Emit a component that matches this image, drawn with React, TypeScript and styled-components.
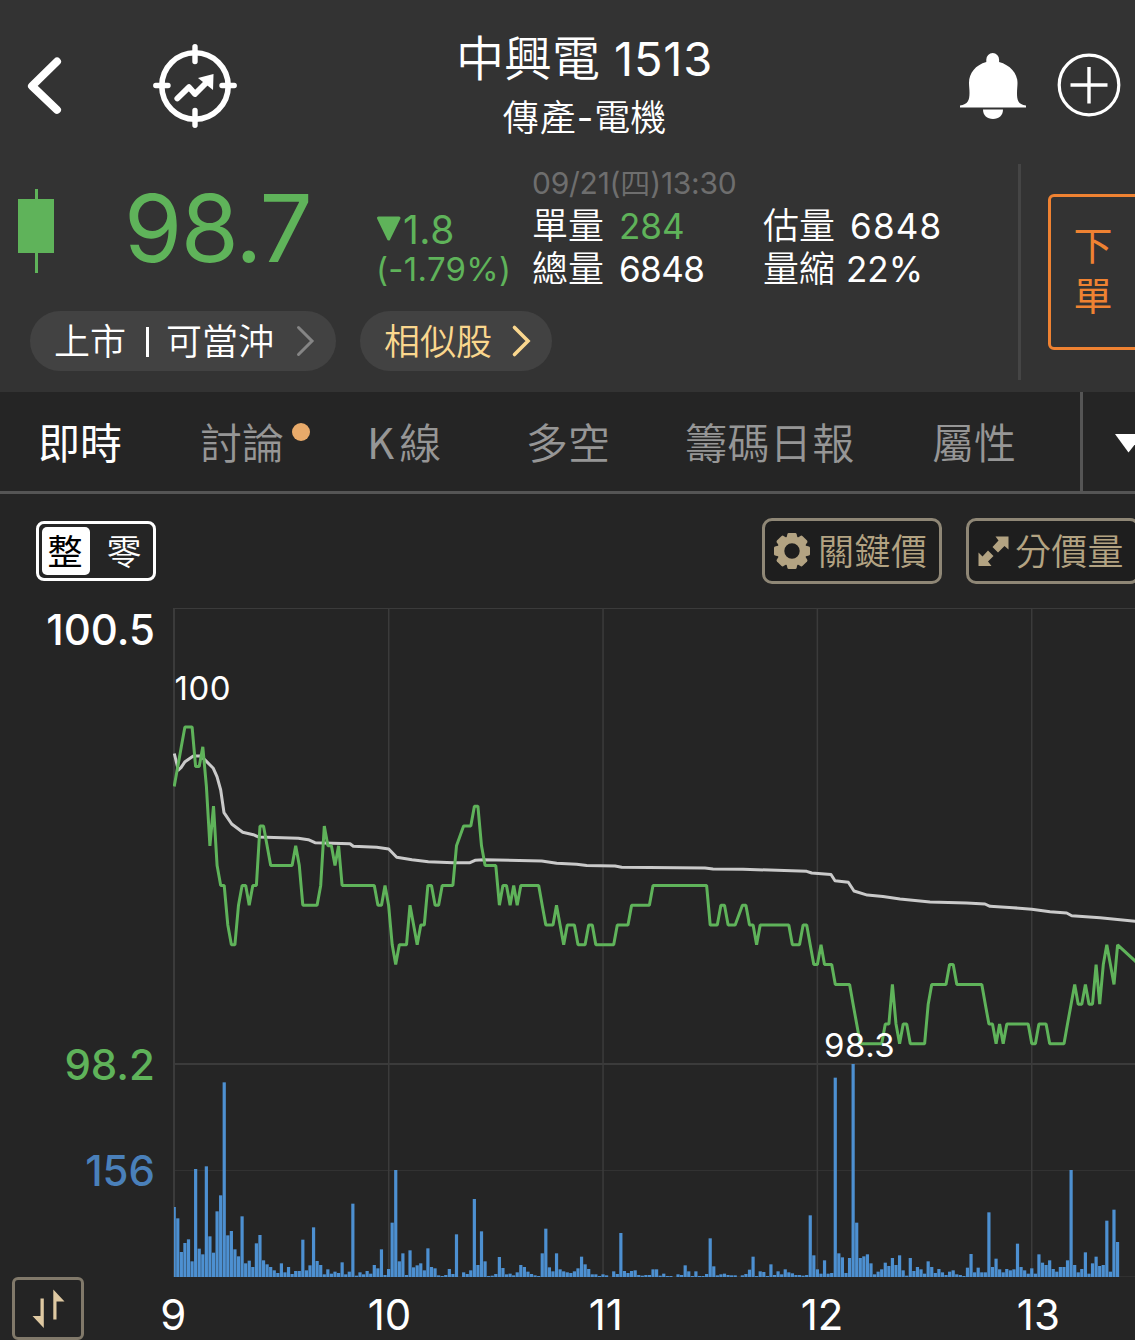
import React from "react";
import styled, { createGlobalStyle } from "styled-components";

const C = {
  header: "#333333",
  body: "#252525",
  green: "#5fb35a",
  blue: "#4d90d1",
  gold: "#fad78e",
  tan: "#b3a382",
  orange: "#ef8232",
  grid: "#3b3b3b",
};

const Global = createGlobalStyle`
  *, *::before, *::after { box-sizing: border-box; }
  html, body { margin: 0; padding: 0; background: ${C.body}; overflow: hidden; }
`;

const Screen = styled.main`
  width: 1135px;
  height: 1340px;
  overflow: hidden;
  display: flex;
  flex-direction: column;
  background: ${C.body};
  color: #fff;
  font-family: Inter, "Noto Sans CJK TC", sans-serif;
  font-weight: 400;
  white-space: pre;
`;

const CJK = styled.span<{ $size: number; $space?: number; $weight?: number }>`
  font-family: "Noto Sans CJK TC", sans-serif;
  font-size: ${(p) => p.$size}px;
  letter-spacing: ${(p) => p.$space ?? 0}px;
  font-weight: ${(p) => p.$weight ?? 350};
`;

const Num = styled.span<{ $size: number; $space?: number; $color?: string; $left?: number }>`
  font-size: ${(p) => p.$size}px;
  letter-spacing: ${(p) => p.$space ?? 0}px;
  color: ${(p) => p.$color ?? "inherit"};
  margin-left: ${(p) => p.$left ?? 0}px;
`;

/* ---------- navigation bar ---------- */

const NavBar = styled.header`
  flex: none;
  height: 160px;
  display: flex;
  background: ${C.header};
  padding: 0 13px 0 24px;
`;

const NavIcons = styled.div<{ $gap: number }>`
  flex: none;
  display: flex;
  align-items: center;
  height: 172px;
  gap: ${(p) => p.$gap}px;
`;

const Titles = styled.div`
  flex: 1;
  display: flex;
  flex-direction: column;
  align-items: center;
  padding-top: 26px;
  margin-right: 28px;
`;

const TitleLine = styled.h1`
  margin: 0;
  height: 61px;
  display: flex;
  align-items: baseline;
  font-weight: 400;
  line-height: 58px;
`;

const SubTitle = styled.div`
  height: 56px;
  line-height: 56px;
  display: flex;
  align-items: baseline;
`;

/* ---------- quote summary ---------- */

const Quote = styled.section`
  flex: none;
  height: 232px;
  display: flex;
  background: ${C.header};
`;

const QuoteMain = styled.div`
  width: 1018px;
  display: flex;
  flex-direction: column;
`;

const QuoteRow = styled.div`
  height: 151px;
  display: flex;
`;

const Candle = styled.div`
  width: 36px;
  margin: 29px 0 0 18px;
  height: 84px;
  display: flex;
  flex-direction: column;
  align-items: center;
`;
const Wick = styled.i<{ $h: number }>`
  width: 3px;
  height: ${(p) => p.$h}px;
  background: ${C.green};
`;
const CandleBody = styled.i`
  width: 36px;
  height: 54px;
  background: ${C.green};
`;

const Price = styled.div`
  width: 252px;
  margin: 10px 0 0 70px;
  font-size: 94px;
  line-height: 116px;
  letter-spacing: -1.5px;
  color: ${C.green};
`;

const Change = styled.div`
  width: 156px;
  color: ${C.green};
  padding-top: 49px;
`;
const ChangeLine = styled.div`
  height: 40px;
  line-height: 41px;
  display: flex;
  align-items: center;
`;

const Stats = styled.div`
  padding-top: 1px;
`;
const Stamp = styled.div`
  height: 41px;
  line-height: 40px;
  color: #6e6e6e;
  display: flex;
  align-items: baseline;
`;
const StatGrid = styled.div`
  display: grid;
  grid-template-columns: 231px 220px;
  grid-auto-rows: 43px;
`;
const Stat = styled.div`
  display: flex;
  align-items: baseline;
  line-height: 43px;
`;

const Chips = styled.div`
  display: flex;
  gap: 24px;
  padding-left: 30px;
`;
const Chip = styled.button<{ $w: number; $gold?: boolean }>`
  width: ${(p) => p.$w}px;
  height: 60px;
  border: 0;
  border-radius: 30px;
  background: #424242;
  color: ${(p) => (p.$gold ? C.gold : "#fff")};
  padding: 0 21px 0 24px;
  display: flex;
  align-items: center;
  justify-content: space-between;
  white-space: pre;
`;
const ChipLabel = styled.span`
  display: flex;
  align-items: center;
  padding-bottom: 4px;
`;
const ChipBar = styled.i`
  width: 3px;
  height: 30px;
  margin: 6px 17px 0 20px;
  background: #fff;
`;

const OrderPane = styled.aside`
  width: 117px;
  height: 216px;
  margin-top: 4px;
  padding: 30px 0 0 27px;
  border-left: 3px solid #454545;
`;
const OrderButton = styled.button`
  width: 100px;
  height: 156px;
  padding: 0 10px 8px 0;
  border: 3px solid ${C.orange};
  border-radius: 6px;
  background: transparent;
  color: ${C.orange};
  display: flex;
  flex-direction: column;
  align-items: center;
  justify-content: center;
`;
const OrderGlyph = styled(CJK)`
  line-height: 50px;
`;

/* ---------- tabs ---------- */

const TabBar = styled.nav`
  flex: none;
  height: 102px;
  display: flex;
  border-bottom: 3px solid #555;
`;
const TabList = styled.div`
  flex: none;
  width: 1083px;
  display: flex;
  padding-left: 38px;
  border-right: 3px solid #555;
`;
const Tab = styled.a<{ $w: number; $active?: boolean }>`
  flex: none;
  width: ${(p) => p.$w}px;
  height: 99px;
  display: flex;
  align-items: baseline;
  line-height: 98px;
  color: ${(p) => (p.$active ? "#fff" : "#969696")};
`;
const Dot = styled.i`
  align-self: flex-start;
  width: 18px;
  height: 18px;
  margin: 31px 0 0 8px;
  border-radius: 50%;
  background: #e8aa6a;
`;
const MoreTabs = styled.div`
  padding: 42px 0 0 32px;
  display: flex;
  align-items: flex-start;
`;

/* ---------- chart tools ---------- */

const Tools = styled.div`
  flex: none;
  height: 114px;
  display: flex;
  padding: 24px 0 0 36px;
`;
const Toggle = styled.div`
  flex: none;
  width: 120px;
  height: 60px;
  margin: 3px 606px 0 0;
  padding: 3px;
  display: flex;
  border: 3px solid #fff;
  border-radius: 8px;
`;
const ToggleItem = styled.span<{ $on?: boolean }>`
  width: ${(p) => (p.$on ? 48 : 70)}px;
  flex: none;
  height: 48px;
  padding: 0 2px 4px 0;
  border-radius: 5px;
  background: ${(p) => (p.$on ? "#fff" : "transparent")};
  color: ${(p) => (p.$on ? "#000" : "#fff")};
  display: flex;
  align-items: center;
  justify-content: center;
`;
const ToolButton = styled.button<{ $w: number; $gap: number }>`
  flex: none;
  width: ${(p) => p.$w}px;
  height: 66px;
  margin-right: 24px;
  padding: 0 0 0 9px;
  display: flex;
  align-items: center;
  gap: ${(p) => p.$gap}px;
  border: 3px solid #8f8776;
  border-radius: 10px;
  background: #1e1e1e;
  color: ${C.tan};
`;
const ToolLabel = styled(CJK)`
  padding-bottom: 4px;
`;

/* ---------- chart ---------- */

const ChartArea = styled.section`
  flex: none;
  height: 669px;
  display: flex;
`;
const Scale = styled.div`
  width: 155px;
  display: flex;
  flex-direction: column;
  align-items: flex-end;
  margin-right: 18px;
`;
const ScaleLabel = styled.div<{ $gap: number; $color: string; $space?: number }>`
  height: 50px;
  margin-top: ${(p) => p.$gap}px;
  line-height: 50px;
  font-size: 42px;
  font-weight: 500;
  letter-spacing: ${(p) => p.$space ?? 0}px;
  color: ${(p) => p.$color};
`;
const Plot = styled.svg`
  display: block;
  width: 962px;
  height: 669px;
  overflow: hidden;
`;
const Footer = styled.footer`
  flex: none;
  height: 63px;
  display: flex;
  padding-left: 12px;
`;
const SwapButton = styled.button`
  flex: none;
  width: 72px;
  height: 63px;
  padding: 0;
  border: 3px solid #81796a;
  border-radius: 6px;
  background: #242424;
  display: flex;
  align-items: center;
  justify-content: center;
`;
const Hours = styled.div`
  margin-left: -19px;
  display: flex;
`;
const Hour = styled.span`
  width: 216.3px;
  line-height: 75px;
  text-align: center;
  font-size: 42px;
`;

/* ---------- data ---------- */

const STEP = 3.5733;
const ORIGIN = 1.2;

// [minute, ticks below the day's high]
const PRICE: [number, number][] = [
  [0, 3], [1, 2], [2, 1], [3, 0], [5, 0], [6, 2], [7, 2], [8, 1], [9, 3], [10, 6], [11, 4], [12, 7], [13, 8], [14, 8],
  [15, 10], [16, 11], [17, 11], [18, 9], [19, 8], [20, 8], [21, 9], [22, 8], [23, 8], [24, 5], [25, 5], [26, 6], [27, 7],
  [33, 7], [34, 6], [35, 7], [36, 9], [40, 9], [41, 8], [42, 5], [43, 6], [44, 6], [45, 7], [46, 6], [47, 8], [56, 8],
  [57, 9], [58, 9], [59, 8], [60, 9], [61, 11], [62, 12], [63, 11], [65, 11], [66, 9], [67, 10], [68, 11], [69, 10],
  [70, 10], [71, 8], [72, 8], [73, 9], [74, 9], [75, 8], [78, 8], [79, 6], [81, 5], [83, 5], [84, 4], [85, 4], [86, 6],
  [87, 7], [90, 7], [91, 9], [92, 8], [93, 8], [94, 9], [95, 8], [96, 9], [97, 8], [102, 8], [103, 9], [104, 10],
  [106, 10], [107, 9], [108, 10], [109, 11], [110, 10], [112, 10], [113, 11], [115, 11], [116, 10], [117, 10], [118, 11],
  [123, 11], [124, 10], [127, 10], [128, 9], [133, 9], [134, 8], [149, 8], [150, 10], [152, 10], [153, 9], [154, 9],
  [155, 10], [157, 10], [159, 9], [160, 9], [161, 10], [162, 10], [163, 11], [164, 10], [172, 10], [173, 11], [175, 11],
  [176, 10], [177, 10], [178, 11], [179, 12], [180, 12], [181, 11], [182, 12], [184, 12], [185, 13], [189, 13],
  [190, 14], [191, 15], [192, 16], [198, 16], [199, 15], [200, 15], [201, 13], [202, 15], [203, 16], [204, 15],
  [205, 15], [206, 16], [210, 16], [211, 14], [212, 13], [216, 13], [217, 12], [218, 12], [219, 13], [226, 13],
  [227, 14], [228, 15], [229, 15], [230, 16], [231, 15], [232, 16], [233, 15], [239, 15], [240, 16], [241, 16],
  [242, 15], [244, 15], [245, 16], [249, 16], [250, 15], [251, 14], [252, 13], [253, 14], [254, 14], [255, 13],
  [256, 14], [257, 14], [258, 12], [259, 14], [260, 12], [261, 11], [262, 12], [263, 13], [264, 11], [270, 12],
];

const AVERAGE: [number, number][] = [
  [174.3, 753.5], [178.3, 770], [181, 767.7], [185, 761.7], [193.3, 755.9], [200.7, 755.9], [206.7, 761.7],
  [213.3, 768.3], [217, 776.7], [220.7, 790], [224, 812.7], [231.7, 824], [242.7, 832.3], [253.3, 834.7],
  [258.3, 836.9], [298.3, 838.2], [308.3, 839.7], [315, 842.7], [350, 843.7], [353.3, 846.3], [376.7, 847.3],
  [388.7, 849], [396.7, 857.2], [412, 859.8], [428.3, 861.7], [453.3, 862.7], [470, 862.7], [475, 860.3], [483.3, 859.7],
  [541.7, 861], [556.7, 863.3], [576.7, 864.3], [586.7, 865.6], [615, 866], [621.7, 867.3], [705, 868], [713, 869],
  [743, 869.2], [806.7, 871.3], [811.7, 873], [831, 874.5], [835, 880.7], [848.3, 882.3], [854, 891], [867.3, 895.1],
  [883, 896.5], [900, 899], [930, 902], [966.7, 903], [985, 904], [990, 906.3], [1013, 907.7], [1031.7, 909.3],
  [1050, 911.7], [1066.7, 913], [1071.7, 915.7], [1100, 917.7], [1136, 921.4],
];

// volume bar heights per minute, in thirds of a pixel
const VOLUME = [
  210, 176, 75, 102, 113, 47, 324, 85, 68, 332, 122, 73, 197, 245, 584, 125, 138, 83, 62, 182, 41, 49, 30, 101, 126,
  50, 38, 30, 20, 12, 41, 14, 30, 9, 18, 18, 112, 20, 35, 149, 48, 36, 8, 23, 10, 16, 12, 44, 8, 16, 220, 4, 14, 8, 18,
  10, 36, 26, 83, 6, 24, 163, 321, 47, 71, 6, 80, 29, 35, 41, 20, 86, 30, 26, 5, 3, 6, 24, 9, 128, 0, 14, 9, 20, 234,
  36, 137, 47, 3, 4, 9, 60, 27, 8, 10, 5, 14, 36, 30, 16, 9, 5, 3, 71, 145, 29, 17, 71, 23, 17, 14, 12, 17, 26, 61, 38,
  24, 8, 8, 3, 8, 5, 0, 17, 9, 132, 18, 12, 18, 20, 6, 4, 6, 6, 23, 23, 4, 10, 3, 3, 0, 8, 6, 35, 17, 3, 17, 3, 3, 9,
  116, 32, 5, 8, 10, 6, 5, 5, 0, 5, 9, 22, 61, 3, 17, 15, 3, 38, 6, 17, 8, 23, 14, 11, 6, 6, 4, 6, 185, 65, 23, 10, 50,
  10, 12, 598, 71, 59, 12, 57, 639, 163, 57, 62, 68, 41, 8, 16, 23, 43, 33, 57, 36, 65, 20, 4, 57, 18, 30, 23, 10, 47,
  30, 12, 24, 14, 6, 16, 20, 8, 6, 3, 28, 69, 14, 28, 14, 14, 194, 30, 55, 23, 14, 24, 20, 23, 100, 30, 20, 10, 26, 10,
  68, 43, 36, 50, 24, 16, 30, 30, 50, 321, 36, 14, 24, 74, 10, 41, 61, 33, 36, 169, 16, 202, 105,
];

const pricePoints = PRICE.map(([m, t]) => `${(ORIGIN + m * STEP).toFixed(1)},${(119 + t * 19.8).toFixed(1)}`).join(" ");
const averagePoints = AVERAGE.map(([x, y]) => `${(x - 173).toFixed(1)},${(y - 608).toFixed(1)}`).join(" ");

/* ---------- icons ---------- */

const BackIcon = () => (
  <svg width="40" height="60" viewBox="0 0 40 60" fill="none">
    <path d="M33 5.500 L8 30 L33 53.800" stroke="#fff" strokeWidth="8" strokeLinecap="round" strokeLinejoin="round" />
  </svg>
);

const TargetIcon = () => (
  <svg width="84" height="84" viewBox="0 0 84 84" fill="none" stroke="#fff" strokeLinecap="round">
    <circle cx="42" cy="42" r="33.2" strokeWidth="5.6" />
    <path d="M42 2.8V17.5M42 66.500V81.200M2.800 41.500H15M69 41.500H81.200" strokeWidth="5.400" />
    <path d="M24.300 54.500 L36 43.200 L42 50 L55 37" strokeWidth="5.800" strokeLinejoin="round" />
    <path d="M45 34 L60.500 30 L60 46 Z" fill="#fff" stroke="none" />
  </svg>
);

const BellIcon = () => (
  <svg width="66" height="66" viewBox="0 0 66 66" fill="#fff">
    <path d="M26.300 9 V6.500 a6.400 6.400 0 0 1 12.800 0 V9 C50 12 57.500 20 57.500 30 C57.500 33 57 36 57 40 C57 47 58 51.500 66 52.500 V54.600 H0 V52.500 C8 51.500 9.500 47 9.500 40 C9.500 36 9 33 9 30 C9 20 15.500 12 26.300 9Z" />
    <path d="M23 56.600 H43 C43 62.500 39 66 33 66 S23 62.500 23 56.600Z" />
  </svg>
);

const PlusIcon = () => (
  <svg width="66" height="66" viewBox="0 0 66 66" fill="none" stroke="#fff">
    <circle cx="33" cy="32" r="29.800" strokeWidth="3.200" />
    <path d="M33 14V50.500M14.500 32H51.500" strokeWidth="3.400" />
  </svg>
);

const Chevron = ({ color, size }: { color: string; size: number }) => (
  <svg width="20" height="34" viewBox="0 0 20 34" fill="none">
    <path d="M3.500 3.500 L17 17 L3.500 30.500" stroke={color} strokeWidth={size} strokeLinecap="round" strokeLinejoin="miter" />
  </svg>
);

const DownMark = () => (
  <svg width="26" height="26" viewBox="0 0 26 26">
    <path d="M2.500 2 H23 L12.700 23Z" fill={C.green} stroke={C.green} strokeWidth="3" strokeLinejoin="round" />
  </svg>
);

const GearIcon = () => (
  <svg width="36" height="36" viewBox="-18 -18 36 36">
    {[0, 45, 90, 135, 180, 225, 270, 315].map((a) => (
      <path key={a} d="M-6 -11 L-4.600 -17 Q-4.300 -18 -3.300 -18 H3.300 Q4.300 -18 4.600 -17 L6 -11Z" fill={C.tan} transform={`rotate(${a})`} />
    ))}
    <circle r="11.200" fill="none" stroke={C.tan} strokeWidth="7" />
  </svg>
);

const ExpandIcon = () => (
  <svg width="31" height="31" viewBox="0 0 31 31" fill={C.tan}>
    <path d="M17.500 0.500 H30.500 V13.500 L26.500 10 L20 16.500 L14.500 11 L20.500 4.500Z" />
    <path d="M13.500 30 H0.500 V16.500 L4.500 20.500 L10 14.500 L15.500 20 L10 25.500Z" />
  </svg>
);

const SwapIcon = () => (
  <svg width="34" height="40" viewBox="0 0 34 40" fill="#dfc9a2">
    <path d="M9.500 9.500H12.800V39L1.500 27H9.500Z" />
    <path d="M22.300 .500L33.500 12.500H25.500V30.500H22.300Z" />
  </svg>
);

export default function App() {
  return (
    <Screen>
      <Global />
      <NavBar>
        <NavIcons $gap={89}>
          <BackIcon />
          <TargetIcon />
        </NavIcons>
        <Titles>
          <TitleLine>
            <CJK $size={48}>中興電</CJK>
            <Num $size={47} $space={0.8} $left={14}>1513</Num>
          </TitleLine>
          <SubTitle>
            <CJK $size={36} $space={1}>傳產</CJK>
            <Num $size={36} $space={1}>-</Num>
            <CJK $size={36}>電機</CJK>
          </SubTitle>
        </Titles>
        <NavIcons $gap={30}>
          <BellIcon />
          <PlusIcon />
        </NavIcons>
      </NavBar>

      <Quote>
        <QuoteMain>
          <QuoteRow>
            <Candle>
              <Wick $h={10} />
              <CandleBody />
              <Wick $h={20} />
            </Candle>
            <Price>98.7</Price>
            <Change>
              <ChangeLine>
                <DownMark />
                <Num $size={39} $space={0.5} $left={1}>1.8</Num>
              </ChangeLine>
              <ChangeLine>
                <Num $size={33} $space={0.3}>(-1.79%)</Num>
              </ChangeLine>
            </Change>
            <Stats>
              <Stamp>
                <Num $size={30} $space={-0.25}>09/21(</Num>
                <CJK $size={30}>四</CJK>
                <Num $size={30} $space={-0.3}>)13:30</Num>
              </Stamp>
              <StatGrid>
                <Stat>
                  <CJK $size={36}>單量</CJK>
                  <Num $size={35} $left={15} $color={C.green}>284</Num>
                </Stat>
                <Stat>
                  <CJK $size={36}>估量</CJK>
                  <Num $size={35} $left={15} $space={1.2}>6848</Num>
                </Stat>
                <Stat>
                  <CJK $size={36}>總量</CJK>
                  <Num $size={35} $left={15} $space={-0.6}>6848</Num>
                </Stat>
                <Stat>
                  <CJK $size={36}>量縮</CJK>
                  <Num $size={35} $left={11}>22%</Num>
                </Stat>
              </StatGrid>
            </Stats>
          </QuoteRow>
          <Chips>
            <Chip $w={306}>
              <ChipLabel>
                <CJK $size={36}>上市</CJK>
                <ChipBar />
                <CJK $size={36}>可當沖</CJK>
              </ChipLabel>
              <Chevron color="#858585" size={3} />
            </Chip>
            <Chip $w={192} $gold>
              <ChipLabel>
                <CJK $size={36}>相似股</CJK>
              </ChipLabel>
              <Chevron color={C.gold} size={3.6} />
            </Chip>
          </Chips>
        </QuoteMain>
        <OrderPane>
          <OrderButton>
            <OrderGlyph $size={39} $weight={400}>下</OrderGlyph>
            <OrderGlyph $size={39} $weight={400}>單</OrderGlyph>
          </OrderButton>
        </OrderPane>
      </Quote>

      <TabBar>
        <TabList>
          <Tab $w={162} $active><CJK $size={42} $weight={400}>即時</CJK></Tab>
          <Tab $w={167}><CJK $size={42}>討論</CJK><Dot /></Tab>
          <Tab $w={159}><CJK $size={42} $space={5} $weight={400}>K</CJK><CJK $size={42}>線</CJK></Tab>
          <Tab $w={159}><CJK $size={42}>多空</CJK></Tab>
          <Tab $w={247}><CJK $size={42} $space={0.4}>籌碼日報</CJK></Tab>
          <Tab $w={100}><CJK $size={42}>屬性</CJK></Tab>
        </TabList>
        <MoreTabs>
          <svg width="28" height="19" viewBox="0 0 28 19"><path d="M0 0H28L13.500 18.500Z" fill="#fff" /></svg>
        </MoreTabs>
      </TabBar>

      <Tools>
        <Toggle>
          <ToggleItem $on><CJK $size={35} $weight={400}>整</CJK></ToggleItem>
          <ToggleItem><CJK $size={35}>零</CJK></ToggleItem>
        </Toggle>
        <ToolButton $w={180} $gap={8}>
          <GearIcon />
          <ToolLabel $size={36} $space={0.5}>關鍵價</ToolLabel>
        </ToolButton>
        <ToolButton $w={174} $gap={6}>
          <ExpandIcon />
          <ToolLabel $size={36} $space={0.3}>分價量</ToolLabel>
        </ToolButton>
      </Tools>

      <ChartArea>
        <Scale>
          <ScaleLabel $gap={-3} $color="#fff">100.5</ScaleLabel>
          <ScaleLabel $gap={385} $color={C.green}>98.2</ScaleLabel>
          <ScaleLabel $gap={56} $color="#4a80ba">156</ScaleLabel>
        </Scale>
        <Plot viewBox="0 0 962 669">
          <g fill={C.grid}>
            <rect x="0" y="0" width="962" height="1" />
            <rect x="0" y="455" width="962" height="2" />
            <rect x="0" y="562" width="962" height="1" fill="#323232" />
            <rect x="0" y="668" width="962" height="1" fill="#303030" />
            <rect x="0" y="0" width="2" height="669" />
            {[215, 429.3, 643.6, 858].map((x) => (
              <rect key={x} x={x} y="0" width="1.5" height="669" />
            ))}
          </g>
          <g fill={C.blue}>
            {VOLUME.map((v, i) => {
              const mid = ORIGIN + i * STEP;
              const left = Math.max(1, mid - 1.6);
              return <rect key={i} x={left} y={669 - v / 3} width={mid + 1.6 - left} height={v / 3} />;
            })}
          </g>
          <polyline points={averagePoints} fill="none" stroke="#cacaca" strokeWidth="3" strokeLinejoin="round" />
          <polyline points={pricePoints} fill="none" stroke={C.green} strokeWidth="3" strokeLinejoin="bevel" />
          <g fill="#fff" fontSize="33" fontFamily="Inter, sans-serif" letterSpacing="0.5">
            <text x="1.500" y="92">100</text>
            <text x="651" y="449">98.3</text>
          </g>
        </Plot>
      </ChartArea>

      <Footer>
        <SwapButton>
          <SwapIcon />
        </SwapButton>
        <Hours>
          {["9", "10", "11", "12", "13"].map((h) => (
            <Hour key={h}>{h}</Hour>
          ))}
        </Hours>
      </Footer>
    </Screen>
  );
}
